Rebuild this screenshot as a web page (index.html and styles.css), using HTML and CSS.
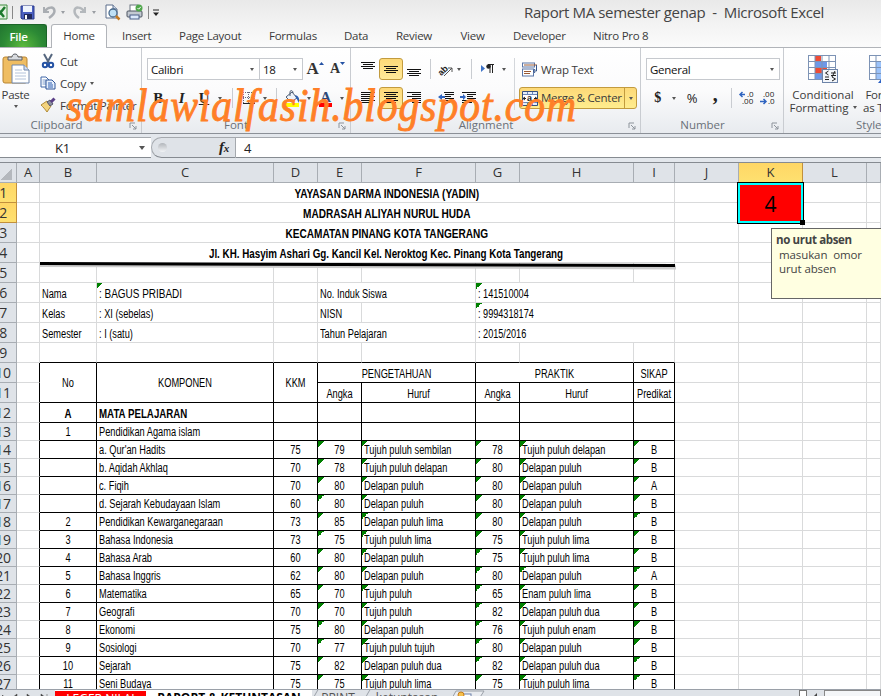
FILE: index.html
```
<!DOCTYPE html>
<html lang="id">
<head>
    <meta charset="UTF-8">
    <meta name="viewport" content="width=device-width, initial-scale=1.0">
    <title>Raport MA semester genap - Microsoft Excel</title>
    <link rel="stylesheet" href="styles.css">
</head>
<body>
<div class="window">

    <!-- Title bar -->
    <header class="titlebar">
        <div class="quick">
            <svg class="q-excel" width="9" height="18" viewBox="0 0 9 18"><path d="M0 2H7V16H0" fill="#e4f1e0" stroke="#3d8b3d"/><path d="M-4 4L4 14M5 4L-3 14" stroke="#1e7a2e" stroke-width="2.5"/></svg>
            <i class="bar"></i>
            <svg class="q-save" width="15" height="15" viewBox="0 0 15 15"><path d="M1 1H14V14H2L1 13Z" fill="#4b5fc0" stroke="#2b3a8c"/><rect x="3" y="1" width="9" height="6" fill="#eef3fc"/><rect x="4" y="9" width="8" height="5" fill="#20285a"/><rect x="5" y="10" width="2" height="4" fill="#fff"/></svg>
            <svg class="q-undo" width="14" height="14" viewBox="0 0 14 14"><path d="M1 2V7H6" fill="none" stroke="#a9adb2" stroke-width="2"/><path d="M2 6C5 2 11 1 11.500 6C11.500 9 9 11 6 13" fill="none" stroke="#a9adb2" stroke-width="2.500"/></svg>
            <i class="arrow dim q-a1"></i>
            <svg class="q-redo" width="14" height="14" viewBox="0 0 14 14"><path d="M13 2V7H8" fill="none" stroke="#b4b8bc" stroke-width="2"/><path d="M12 6C9 2 3 1 2.500 6C2.500 9 4 11 7 13" fill="none" stroke="#b4b8bc" stroke-width="2.500"/></svg>
            <i class="arrow dim q-a2"></i>
            <svg class="q-view" width="16" height="16" viewBox="0 0 16 16"><path d="M1 1H8L12 5V14H1Z" fill="#fff" stroke="#5d6f8c"/><path d="M8 1V5H12" fill="#cfd9ea" stroke="#5d6f8c"/><circle cx="8" cy="9" r="4" fill="#bfe0f5" stroke="#4a6a8c" stroke-width="1.300"/><path d="M11 12L14.500 15.500" stroke="#c47a22" stroke-width="2.500"/></svg>
            <svg class="q-print" width="17" height="16" viewBox="0 0 17 16"><rect x="4" y="1" width="8" height="7" fill="#fff" stroke="#6b7480"/><rect x="1" y="7" width="15" height="6" rx="1" fill="#c3c9d1" stroke="#4d5560"/><rect x="4" y="11" width="9" height="4" fill="#dce9fb" stroke="#4a5f88"/><circle cx="13" cy="4" r="3.500" fill="#4fa64b"/><path d="M11.500 4L12.700 5.200L14.800 2.800" fill="none" stroke="#fff"/></svg>
            <i class="bar"></i>
            <svg class="q-more" width="8" height="8" viewBox="0 0 8 8"><path d="M1 1H7" stroke="#222"/><path d="M1 3.500H7L4 7Z" fill="#222"/></svg>
        </div>
        <h1>Raport MA semester genap&nbsp; -&nbsp; Microsoft Excel</h1>
    </header>

    <!-- Ribbon tabs -->
    <nav class="tabs">
        <a class="file">File</a>
        <a class="home">Home</a>
        <a class="t-insert">Insert</a>
        <a class="t-layout">Page Layout</a>
        <a class="t-formulas">Formulas</a>
        <a class="t-data">Data</a>
        <a class="t-review">Review</a>
        <a class="t-view">View</a>
        <a class="t-dev">Developer</a>
        <a class="t-nitro">Nitro Pro 8</a>
    </nav>

    <!-- Ribbon -->
    <section class="ribbon">
        <div class="group clipboard">
            <div class="controls">
                <div class="paste">
                    <svg width="30" height="32" viewBox="0 0 30 32"><rect x="2" y="4" width="24" height="26" rx="2" fill="#efbd62" stroke="#b98532"/><path d="M7 7V4H11C11 0 17 0 17 4H21V7Z" fill="#d8dbdf" stroke="#5b5f66"/><path d="M11 12H23L28 17V30H11Z" fill="#fff" stroke="#6f86ab"/><path d="M23 12V17H28" fill="#d5e0f1" stroke="#6f86ab"/><path d="M14 17H21M14 20H25M14 23H25M14 26H25" stroke="#b4c3da"/></svg>
                    <span>Paste</span>
                    <i class="arrow"></i>
                </div>
                <ul class="edit">
                    <li><svg width="16" height="16" viewBox="0 0 16 16"><path d="M4 1L9 10M12 1L7 10" stroke="#56677f" stroke-width="2"/><circle cx="5" cy="12" r="2.200" fill="none" stroke="#2452a4" stroke-width="2"/><circle cx="11" cy="12" r="2.200" fill="none" stroke="#2452a4" stroke-width="2"/></svg>Cut</li>
                    <li><svg width="16" height="16" viewBox="0 0 16 16"><path d="M1 2H6L9 5V12H1Z" fill="#fff" stroke="#3f66a8"/><path d="M2.500 5H6M2.500 7H6M2.500 9H6" stroke="#7d9ccc"/><path d="M6 5H12L15 8V14H6Z" fill="#e7f0fd" stroke="#2f5597"/><path d="M8 8H12M8 10H13M8 12H13" stroke="#2f5fb0"/></svg>Copy<i class="arrow"></i></li>
                    <li><svg width="16" height="16" viewBox="0 0 16 16"><path d="M1 8L7 4L11 9L7 15C5 12 3 10 1 8Z" fill="#f3d37c" stroke="#b08a35"/><path d="M7 5L10 3L13 7L10 9Z" fill="#8c8fa0" stroke="#55586a"/><path d="M11 5L14.500 1.500" stroke="#5a3f86" stroke-width="3"/></svg>Format Painter</li>
                </ul>
            </div>
            <div class="caption"><span>Clipboard</span><svg class="launch" viewBox="0 0 8 8"><path d="M1 6V1H6M3 3L7 7M7 4V7H4" fill="none" stroke="#8d939b"/></svg></div>
        </div>

        <div class="group font">
            <div class="controls">
                <div class="line fontrow1">
                    <div class="combo">Calibri<i class="arrow"></i></div>
                    <div class="combo size">18<i class="arrow"></i></div>
                    <span class="grow">A<svg width="5" height="3" viewBox="0 0 5 3"><path d="M0 3L2.500 0L5 3Z" fill="#2452a4"/></svg></span>
                    <span class="grow small">A<svg width="5" height="3" viewBox="0 0 5 3"><path d="M0 0L2.500 3L5 0Z" fill="#2452a4"/></svg></span>
                </div>
                <div class="line fontrow2">
                    <b>B</b><b><em>I</em></b><b><u>U</u></b><i class="arrow"></i><i class="sep"></i>
                    <svg width="14" height="14" viewBox="0 0 14 14"><path d="M1.500 1V12M6.500 1V12M12.500 1V12M1 1.500H13M1 6.500H13" stroke="#667" stroke-dasharray="1 1"/><path d="M1 12.500H13" stroke="#222"/></svg>
                    <i class="arrow"></i><i class="sep"></i>
                    <svg width="17" height="17" viewBox="0 0 17 17"><rect x="0" y="13" width="15" height="4" fill="#ff0"/><path d="M2 7L8 2L13 8L7 12Z" fill="#edf3fa" stroke="#4a5a73"/><path d="M6 6V2C6 0 9 0 9 3" fill="none" stroke="#4a5a73"/><path d="M11 5C15 6 16 9 14.500 13C13.500 10 13 9 12 8Z" fill="#2f5fb0"/></svg>
                    <i class="arrow"></i>
                    <span class="fontcolor">A</span>
                    <i class="arrow"></i>
                </div>
            </div>
            <div class="caption"><span>Font</span><svg class="launch" viewBox="0 0 8 8"><path d="M1 6V1H6M3 3L7 7M7 4V7H4" fill="none" stroke="#8d939b"/></svg></div>
        </div>

        <div class="group alignment">
            <div class="controls">
                <div class="aligns">
                    <div class="line alignrow1">
                        <svg width="14" height="14" viewBox="0 0 14 14"><path d="M0 .5H14M2 2.500H12M0 4.500H14M2 6.500H12" stroke="#111"/></svg>
                        <span class="on"><svg width="14" height="14" viewBox="0 0 14 14"><path d="M0 4.500H14M2 6.500H12M0 8.500H14M2 10.500H12" stroke="#111"/></svg></span>
                        <svg width="14" height="14" viewBox="0 0 14 14"><path d="M0 7.500H14M2 9.500H12M0 11.500H14M2 13.500H12" stroke="#111"/></svg>
                        <i class="sep"></i>
                        <svg width="16" height="16" viewBox="0 0 16 16"><text x="-1" y="13" transform="rotate(-45 4 9)" class="ab">ab</text><path d="M6 15L14 7M14 11V7H10" fill="none" stroke="#555"/></svg>
                        <i class="arrow"></i><i class="sep"></i>
                        <svg width="14" height="12" viewBox="0 0 14 12"><path d="M0 2L4 5.500L0 9Z" fill="#3f74c8"/><path d="M9 2V10M11.500 2V10M7 1.500H13" stroke="#222" fill="none"/><circle cx="7.500" cy="3.500" r="2.200" fill="#222"/></svg>
                        <i class="arrow"></i>
                    </div>
                    <div class="line alignrow2">
                        <svg width="14" height="12" viewBox="0 0 14 12"><path d="M0 .5H14M0 2.500H9M0 4.500H14M0 6.500H9M0 8.500H14M0 10.500H9" stroke="#111"/></svg>
                        <span class="on"><svg width="14" height="12" viewBox="0 0 14 12"><path d="M0 .5H14M2 2.500H12M0 4.500H14M2 6.500H12M0 8.500H14M2 10.500H12" stroke="#111"/></svg></span>
                        <svg width="14" height="12" viewBox="0 0 14 12"><path d="M0 .5H14M5 2.500H14M0 4.500H14M5 6.500H14M0 8.500H14M5 10.500H14" stroke="#111"/></svg>
                        <i class="sep"></i>
                        <svg width="16" height="12" viewBox="0 0 16 12"><path d="M6 .5H16M7 2.500H16M7 4.500H13M7 6.500H16M5 8.500H16M5 10.500H12" stroke="#111"/><path d="M0 5L4 2V4H7V6H4V8Z" fill="#2f64c0"/></svg>
                        <svg width="16" height="12" viewBox="0 0 16 12"><path d="M2 .5H16M7 2.500H16M7 4.500H13M7 6.500H16M2 8.500H16M2 10.500H12" stroke="#111"/><path d="M6 5L3 2V4H0V6H3V8Z" fill="#2f64c0"/></svg>
                    </div>
                </div>
                <div class="wraps">
                    <div class="wrap">
                        <svg width="16" height="15" viewBox="0 0 16 15"><rect x=".5" y="1" width="12" height="4" fill="#fff" stroke="#5a76a8"/><path d="M2 3H15" stroke="#9a5a35"/><rect x=".5" y="7" width="11" height="7" fill="#fff" stroke="#5a76a8"/><path d="M2 9.500H9M2 11.500H8" stroke="#9a5a35"/><path d="M14.500 3V9H12M13 7L11.500 9L13 11" fill="none" stroke="#34558b"/></svg>
                        Wrap Text
                    </div>
                    <div class="merge">
                        <svg width="16" height="15" viewBox="0 0 16 15"><path d="M.5 .5H15.500V14.500H.5Z" fill="#e4eefb" stroke="#35507f"/><path d="M5.500 1V4M10.500 1V4M5.500 11V14M10.500 11V14M1 3.500H15M1 11.500H15" stroke="#6b86b5"/><rect x="1" y="4" width="14" height="7" fill="#fff"/><text x="5" y="10" class="ab">a</text><path d="M1 7.500H4M3 6L1 7.500L3 9M15 7.500H12M13 6L15 7.500L13 9" fill="none" stroke="#222"/></svg>
                        <span>Merge &amp; Center</span><i class="arrow"></i>
                    </div>
                </div>
            </div>
            <div class="caption"><span>Alignment</span><svg class="launch" viewBox="0 0 8 8"><path d="M1 6V1H6M3 3L7 7M7 4V7H4" fill="none" stroke="#8d939b"/></svg></div>
        </div>

        <div class="group number">
            <div class="controls">
                <div class="combo general">General<i class="arrow"></i></div>
                <div class="line numberrow">
                    <b>$</b><i class="arrow"></i><span class="percent">%</span><b class="comma">,</b><i class="sep"></i>
                    <svg width="17" height="14" viewBox="0 0 17 14"><path d="M1 3.500H6M3.500 1L1 3.500L3.500 6" fill="none" stroke="#2f64c0" stroke-width="1.500"/><text x="8" y="6" class="dec">.0</text><text x="3" y="13" class="dec">.00</text></svg>
                    <svg width="17" height="14" viewBox="0 0 17 14"><path d="M0 10.500H6M3.500 8L6 10.500L3.500 13" fill="none" stroke="#2f64c0" stroke-width="1.500"/><text x="3" y="6" class="dec">.00</text><text x="8" y="13" class="dec">.0</text></svg>
                </div>
            </div>
            <div class="caption"><span>Number</span><svg class="launch" viewBox="0 0 8 8"><path d="M1 6V1H6M3 3L7 7M7 4V7H4" fill="none" stroke="#8d939b"/></svg></div>
        </div>

        <div class="group styles">
            <div class="controls">
                <div class="big cond">
                    <svg width="30" height="28" viewBox="0 0 30 28"><rect x=".5" y=".5" width="27" height="24" fill="#fff" stroke="#7d93b5"/><rect x="7" y="1" width="6" height="5" fill="#ee4b35"/><rect x="7" y="7" width="12" height="5" fill="#6d97e8"/><rect x="7" y="13" width="12" height="5" fill="#ee4b35"/><rect x="7" y="19" width="7" height="5" fill="#6d97e8"/><path d="M7 0V25M14 0V25M21 0V25M0 6.500H28M0 12.500H28M0 18.500H28" stroke="#7d93b5"/><rect x="14.500" y="14.500" width="15" height="13" fill="#f3f6fb" stroke="#6c83a8"/><path d="M20.500 16L17.500 18L20.500 20M17 22H21M17 24.500H21M23 18H28M23 20.500H28M27 16L24 22M24 22L27.500 24L24 26" fill="none" stroke="#222"/></svg>
                    <span>Conditional</span><span>Formatting<i class="arrow"></i></span>
                </div>
                <div class="big fmt">
                    <svg width="30" height="28" viewBox="0 0 30 28"><rect x=".5" y=".5" width="27" height="24" fill="#fff" stroke="#7d93b5"/><rect x="7" y="6" width="20" height="18" fill="#9cc3fa"/><path d="M7 0V25M14 0V25M0 6.500H28M0 12.500H28M0 18.500H28" stroke="#7d93b5"/><path d="M9 28L13 23V28Z" fill="#2c61c4"/></svg>
                    <span>Format</span><span>as Table</span>
                </div>
            </div>
            <div class="caption"><span>Styles</span></div>
        </div>
    </section>

    <!-- Formula bar -->
    <section class="formula">
        <div class="namebox"><span>K1</span><i class="arrow"></i></div>
        <div class="fx"><i class="knob"></i><em>f<small>x</small></em></div>
        <div class="value">4</div>
    </section>

    <!-- Worksheet -->
    <main class="sheet">
        <table>
            <colgroup>
                <col class="c-num"><col class="c-a"><col class="c-b"><col class="c-c"><col class="c-d"><col class="c-e"><col class="c-f"><col class="c-e"><col class="c-f"><col class="c-i"><col class="c-j"><col class="c-j"><col class="c-j"><col class="c-m">
            </colgroup>
            <thead>
                <tr><th class="corner"></th><th>A</th><th>B</th><th>C</th><th>D</th><th>E</th><th>F</th><th>G</th><th>H</th><th>I</th><th>J</th><th class="picked">K</th><th>L</th><th></th></tr>
            </thead>
            <tbody class="kop">
                <tr><th class="picked">1</th><td></td><td colspan="8" class="title"><span>YAYASAN DARMA INDONESIA (YADIN)</span></td><td></td><td rowspan="2" class="active"><div class="selection">4<i></i></div></td><td></td><td></td></tr>
                <tr><th class="picked">2</th><td></td><td colspan="8" class="title"><span>MADRASAH ALIYAH NURUL HUDA</span></td><td></td><td></td><td></td></tr>
                <tr><th>3</th><td></td><td colspan="8" class="title"><span>KECAMATAN PINANG KOTA TANGERANG</span></td><td></td><td></td><td></td><td></td></tr>
                <tr><th>4</th><td></td><td colspan="8" class="title address"><span>Jl. KH. Hasyim Ashari Gg. Kancil Kel. Neroktog Kec. Pinang Kota Tangerang</span></td><td></td><td></td><td></td><td></td></tr>
                <tr><th>5</th><td></td><td></td><td></td><td></td><td></td><td></td><td></td><td></td><td></td><td></td><td></td><td></td><td></td></tr>
                <tr><th>6</th><td></td><td><span>Nama</span></td><td class="err name"><span>: BAGUS PRIBADI</span></td><td></td><td colspan="2"><span>No. Induk Siswa</span></td><td colspan="3" class="err id"><span>: 141510004</span></td><td></td><td></td><td></td><td></td></tr>
                <tr><th>7</th><td></td><td><span>Kelas</span></td><td><span>: XI (sebelas)</span></td><td></td><td><span>NISN</span></td><td></td><td colspan="3" class="err id"><span>: 9994318174</span></td><td></td><td></td><td></td><td></td></tr>
                <tr><th>8</th><td></td><td><span>Semester</span></td><td><span>: I (satu)</span></td><td></td><td colspan="2"><span>Tahun Pelajaran</span></td><td colspan="3" class="id"><span>: 2015/2016</span></td><td></td><td></td><td></td><td></td></tr>
                <tr class="last"><th>9</th><td></td><td></td><td></td><td></td><td></td><td></td><td></td><td></td><td></td><td></td><td></td><td></td><td></td></tr>
            </tbody>
            <tbody class="heading">
                <tr><th>10</th><td></td><td rowspan="2" class="mid"><span>No</span></td><td rowspan="2" class="mid"><span>KOMPONEN</span></td><td rowspan="2" class="mid"><span>KKM</span></td><td colspan="2"><span>PENGETAHUAN</span></td><td colspan="2"><span>PRAKTIK</span></td><td><span>SIKAP</span></td><td class="out"></td><td class="out"></td><td class="out"></td><td class="out"></td></tr>
                <tr><th>11</th><td></td><td><span>Angka</span></td><td><span>Huruf</span></td><td><span>Angka</span></td><td><span>Huruf</span></td><td class="predikat"><span>Predikat</span></td><td class="out"></td><td class="out"></td><td class="out"></td><td class="out"></td></tr>
            </tbody>
            <tbody class="marks">
                <tr class="tall"><th>12</th><td></td><td><b>A</b></td><td><b>MATA PELAJARAN</b></td><td></td><td></td><td></td><td></td><td></td><td></td><td></td><td></td><td></td><td></td></tr>
                <tr><th>13</th><td></td><td><span>1</span></td><td><span>Pendidikan Agama islam</span></td><td></td><td></td><td></td><td></td><td></td><td></td><td></td><td></td><td></td><td></td></tr>
            </tbody>
            <tbody class="marks filled" id="nilai"></tbody>
        </table>
        <svg class="rule" width="640" height="10" viewBox="0 0 640 10"><path d="M0 4L636 6.500" stroke="#ccc" stroke-width="4"/><path d="M0 2.500L635 4.500" stroke="#000" stroke-width="3"/></svg>
        <aside class="hint"><b>no urut absen</b><p>masukan&nbsp; omor</p><p>urut absen</p></aside>
    </main>

    <!-- Sheet tabs -->
    <footer class="sheets">
        <svg class="nav" width="54" height="12" viewBox="0 0 54 12"><path d="M3 5L-1 9L3 12ZM17 4L12 8L17 12ZM27 4L32 8L27 12ZM41 4L46 8L41 12ZM47 4V12" fill="#444" stroke="#444" stroke-width=".5"/></svg>
        <span class="leger">LEGER NILAI</span>
        <span class="current">RAPORT &amp; KETUNTASAN</span>
        <span class="other print">PRINT</span>
        <span class="other ket">ketuntasan</span>
        <svg class="new" width="34" height="12" viewBox="0 0 34 12"><path d="M0 12L6 1H34L27 12" fill="#e9ecf0" stroke="#9aa0a8"/><rect x="13" y="4" width="8" height="8" fill="#fff" stroke="#6a7fa8"/><circle cx="11" cy="5" r="3" fill="#f5c04c" stroke="#c67b1a"/></svg>
        <div class="scroll"><i class="grip"></i><i class="left"></i><i class="track"></i></div>
    </footer>

    <svg class="watermark" width="530" height="64" viewBox="0 0 530 64"><text x="6" y="38" textLength="511" lengthAdjust="spacingAndGlyphs">samlawialfasih.blogspot.com</text></svg>
</div>
<script src="script.js"></script>
</body>
</html>
```
FILE: script.js
```
// no, komponen, kkm, angka, huruf (pengetahuan), angka, huruf (praktik), predikat
const nilai = [
    ['', "a. Qur'an Hadits", 75, 79, 'Tujuh puluh sembilan', 78, 'Tujuh puluh delapan', 'B'],
    ['', 'b. Aqidah Akhlaq', 70, 78, 'Tujuh puluh delapan', 80, 'Delapan puluh', 'B'],
    ['', 'c. Fiqih', 70, 80, 'Delapan puluh', 80, 'Delapan puluh', 'A'],
    ['', 'd. Sejarah Kebudayaan Islam', 60, 80, 'Delapan puluh', 80, 'Delapan puluh', 'B'],
    [2, 'Pendidikan Kewarganegaraan', 73, 85, 'Delapan puluh lima', 80, 'Delapan puluh', 'B'],
    [3, 'Bahasa Indonesia', 73, 75, 'Tujuh puluh lima', 75, 'Tujuh puluh lima', 'B'],
    [4, 'Bahasa Arab', 60, 80, 'Delapan puluh', 75, 'Tujuh puluh lima', 'B'],
    [5, 'Bahasa Inggris', 62, 80, 'Delapan puluh', 80, 'Delapan puluh', 'A'],
    [6, 'Matematika', 65, 70, 'Tujuh puluh', 65, 'Enam puluh lima', 'B'],
    [7, 'Geografi', 70, 70, 'Tujuh puluh', 82, 'Delapan puluh dua', 'B'],
    [8, 'Ekonomi', 75, 80, 'Delapan puluh', 76, 'Tujuh puluh enam', 'B'],
    [9, 'Sosiologi', 70, 77, 'Tujuh puluh tujuh', 80, 'Delapan puluh', 'B'],
    [10, 'Sejarah', 75, 82, 'Delapan puluh dua', 82, 'Delapan puluh dua', 'B'],
    [11, 'Seni Budaya', 75, 75, 'Tujuh puluh lima', 75, 'Tujuh puluh lima', 'B']
];

const body = document.getElementById('nilai');
nilai.forEach((row, i) => {
    const cells = row.map(v => '<td><span>' + v + '</span></td>').join('');
    body.insertAdjacentHTML('beforeend',
        '<tr><th>' + (i + 14) + '</th><td></td>' + cells + '<td></td><td></td><td></td><td></td></tr>');
});
```
FILE: styles.css
```
* {
    box-sizing: border-box;
}
body {
    margin: 0;
    background: #fff;
    font-family: "Open Sans", "Noto Sans", sans-serif;
    font-size: 11.5px;
    letter-spacing: -.27px;
    color: #3b3b3b;
}
.window {
    position: relative;
    width: 881px;
    height: 696px;
    overflow: hidden;
    display: flex;
    flex-direction: column;
}
svg {
    display: block;
    flex: none;
    overflow: visible;
}

/* small drop-down arrow */
.arrow {
    display: inline-block;
    flex: none;
    width: 0;
    height: 0;
    border: 2.5px solid transparent;
    border-top: 3px solid #555;
    border-bottom: 0;
}
.arrow.dim {
    border-top-color: #9a9ea3;
}

/* title bar */
.titlebar {
    height: 24px;
    display: flex;
    align-items: center;
    background: linear-gradient(#e9e9e9, #f3f3f3);
}
.quick {
    width: 524px;
    height: 20px;
    display: flex;
    align-items: center;
}
.bar {
    width: 1px;
    height: 13px;
    background: #888;
    margin-left: 3px;
}
.q-excel { overflow: hidden; }
.q-save { margin-left: 7px; }
.q-undo { margin-left: 8px; }
.q-a1 { margin-left: 4px; }
.q-redo { margin-left: 7px; }
.q-a2 { margin-left: 6px; }
.q-view { margin-left: 9px; }
.q-print { margin-left: 5px; }
.q-more { margin-left: 3px; margin-top: 2px; }
.quick .q-print + .bar { margin-left: 5px; }
.titlebar h1 {
    margin: 0;
    font-size: 15px;
    font-weight: normal;
    letter-spacing: -.37px;
    white-space: nowrap;
    color: #444;
}

/* ribbon tabs */
.tabs {
    height: 23px;
    display: flex;
    background: linear-gradient(#f3f3f3, #fbfbfb);
}
.tabs a {
    line-height: 24px;
    text-align: center;
    white-space: nowrap;
    margin-right: 28px;
}
.tabs .file {
    width: 47px;
    margin-right: 4px;
    padding-right: 9px;
    color: #fff;
    font-weight: 600;
    background: radial-gradient(ellipse at 50% 100%, #5cba3c, #2c8a35 60%, #217430);
    border: 1px solid #1b6428;
    border-width: 1px 1px 0 0;
    border-radius: 0 3px 0 0;
}
.tabs .home {
    width: 56px;
    height: 24px;
    margin-right: 15px;
    background: #fff;
    border: 1px solid #b1b4b9;
    border-bottom: 0;
    border-radius: 3px 3px 0 0;
    line-height: 22px;
    z-index: 1;
}
.t-insert { width: 29px; }
.t-layout { width: 62px; }
.t-formulas { width: 47px; }
.t-data { width: 24px; }
.t-review { width: 36px; }
.t-view { width: 25px; }
.t-dev { width: 52px; }
.t-nitro { width: 55px; }

/* ribbon */
.ribbon {
    height: 87px;
    display: flex;
    background: linear-gradient(#fff, #fbfbfc 50%, #e8ebef);
    border-top: 1px solid #b1b4b9;
    border-bottom: 1px solid #8b9097;
}
.group {
    display: flex;
    flex-direction: column;
    border-right: 1px solid #c9ccd1;
    flex: none;
}
.controls {
    height: 69px;
}
.caption {
    display: flex;
    height: 16px;
    line-height: 16px;
    letter-spacing: 0;
    color: #6a7078;
    justify-content: space-between;
    padding-right: 4px;
}
.caption span {
    flex: 1;
    text-align: center;
}
.launch {
    width: 8px;
    height: 8px;
    margin-top: 5px;
}
.clipboard { width: 142px; }
.font { width: 209px; }
.alignment { width: 290px; }
.number { width: 143px; }
.styles { width: 180px; }

.clipboard .controls {
    display: flex;
}
.clipboard .caption span {
    padding-right: 16px;
}
.font .caption span {
    padding-right: 8px;
}
.alignment .caption span,
.number .caption span {
    padding-right: 7px;
}
.paste {
    width: 38px;
    padding-top: 5px;
    display: flex;
    flex-direction: column;
    align-items: center;
    padding-right: 7px;
}
.paste span {
    line-height: 20px;
}
.edit {
    list-style: none;
    margin: 2px 0 0 2px;
    padding: 0;
}
.edit li {
    display: flex;
    align-items: center;
    gap: 4px;
    height: 22px;
    white-space: nowrap;
}
.line {
    display: grid;
    align-items: center;
    justify-items: center;
    height: 22px;
}
.sep {
    width: 1px;
    height: 20px;
    background: #c9ccd1;
}
.font .controls,
.number .controls {
    padding: 10px 0 0 5px;
}
.fontrow1 {
    grid-template-columns: 113px 43px 24px 21px;
}
.fontrow2 {
    grid-template-columns: 22px 25px 20px 12px 12px 21px 12px 10px 22px 11px 23px 9px;
    margin-top: 7px;
    font-family: "Liberation Serif", serif;
    font-size: 15px;
    color: #222;
}
.combo {
    width: 100%;
    height: 22px;
    padding: 0 5px 0 3px;
    display: flex;
    align-items: center;
    justify-content: space-between;
    background: #fff;
    border: 1px solid #c6c9ce;
    color: #111;
}
.combo.size {
    border-left: 0;
}
.grow {
    display: flex;
    font: bold 17px/22px "Liberation Serif", serif;
    color: #333;
}
.grow.small {
    font-size: 14px;
}
.grow svg {
    margin-top: 4px;
}
.fontcolor {
    width: 13px;
    height: 17px;
    line-height: 14px;
    text-align: center;
    font-weight: bold;
    color: #2f4a78;
    border-bottom: 4px solid #f00;
}
.alignment .controls {
    display: flex;
    padding: 10px 0 0 6px;
}
.aligns {
    width: 158px;
    border-right: 1px solid #d4d7db;
    height: 52px;
}
.alignrow1 {
    grid-template-columns: 22px 24px 22px 10px 21px 6px 18px 15px 18px;
}
.alignrow2 {
    grid-template-columns: 22px 24px 22px 10px 22px 22px;
    margin-top: 7px;
}
.alignrow2 .sep {
    visibility: hidden;
}
.on {
    display: grid;
    place-items: center;
    width: 24px;
    height: 22px;
    background: linear-gradient(#fdd978, #ffe99a);
    border: 1px solid #c29b3e;
    border-radius: 3px;
}
.ab {
    font: bold 9px "Liberation Sans", sans-serif;
    fill: #222;
}
.wraps {
    padding-left: 4px;
}
.wrap,
.merge {
    display: flex;
    align-items: center;
    gap: 3px;
    height: 22px;
    padding-left: 3px;
    white-space: nowrap;
}
.merge {
    margin-top: 7px;
    width: 118px;
    padding-left: 2px;
    border: 1px solid #c29b3e;
    border-radius: 3px;
    background: linear-gradient(#fdd978, #ffed8e);
}
.merge span {
    width: 84px;
    line-height: 20px;
    border-right: 1px solid #c29b3e;
}
.merge .arrow {
    margin-left: 1px;
}
.general {
    width: 134px;
}
.numberrow {
    grid-template-columns: 23px 10px 26px 20px 12px 20px 22px;
    margin-top: 7px;
    color: #222;
}
.numberrow b {
    font: bold 14px "Liberation Serif", serif;
}
.numberrow .comma {
    font-size: 20px;
    line-height: 10px;
    margin-top: -8px;
}
.percent {
    font-size: 13px;
}
.dec {
    font-size: 8px;
    letter-spacing: 0;
    fill: #222;
}
.styles .controls {
    display: flex;
    padding-top: 7px;
}
.big {
    display: flex;
    flex-direction: column;
    align-items: center;
    line-height: 13px;
    white-space: nowrap;
}
.big svg {
    margin-bottom: 5px;
}
.cond { width: 78px; }
.fmt { width: 44px; }
.cond span {
    letter-spacing: 0;
}
.cond .arrow {
    margin: 0 0 3px 4px;
}

/* formula bar */
.formula {
    height: 29px;
    padding: 3px 0 4px;
    display: flex;
    background: #e3e7ec;
    border-bottom: 1px solid #868b91;
    font-size: 13px;
}
.formula > div {
    border-top: 1px solid #a5a9ae;
    border-bottom: 1px solid #868b91;
    background: #fff;
    display: flex;
    align-items: center;
    color: #222;
}
.namebox {
    width: 151px;
    padding-right: 6px;
}
.namebox span {
    flex: 1;
    padding-right: 14px;
    text-align: center;
}
.namebox .arrow {
    border-width: 4px 3.5px 0;
}
.fx {
    width: 85px;
    justify-content: space-between;
    padding: 0 6px 0 6px;
    border-right: 1px solid #a5a9ae;
}
.formula > .fx {
    background: #dfe3e8;
    border-left: 1px solid #a5a9ae;
    border-radius: 11px 0 0 11px;
}
.knob {
    width: 9px;
    height: 9px;
    border-radius: 50%;
    background: linear-gradient(#b2b6bb, #f2f4f6);
}
.fx em {
    font: italic bold 15px/18px "Liberation Serif", serif;
}
.fx small {
    font-size: 11px;
}
.value {
    flex: 1;
    padding-left: 8px;
}

/* worksheet */
.sheet {
    position: relative;
    height: 526px;
    overflow: hidden;
    color: #000;
}
table {
    width: 881px;
    table-layout: fixed;
    border-spacing: 0;
    letter-spacing: 0;
}
.c-num { width: 17px; }
.c-a { width: 23px; }
.c-b { width: 57px; }
.c-c { width: 177px; }
.c-d { width: 44px; }
.c-e { width: 44px; }
.c-f { width: 114px; }
.c-i { width: 41px; }
.c-j { width: 64px; }
.c-m { width: 14px; }
tr {
    height: 20px;
}
.marks tr {
    height: 18px;
}
.marks .tall {
    height: 20px;
}
td, th {
    padding: 0;
    border-right: 1px solid #d9dadb;
    border-bottom: 1px solid #d9dadb;
    white-space: nowrap;
}
td {
    padding: 0 2px;
    vertical-align: bottom;
    font: 12px/16px "Liberation Sans", sans-serif;
}
/* narrow the cell text, the report uses a condensed face */
td span,
td b {
    display: block;
    transform: scaleX(.77);
    transform-origin: 0 50%;
}
th {
    font-size: 13px;
    font-weight: normal;
    line-height: 17px;
    color: #333;
    background: #dfe3e8;
    border-color: #a8adb3;
}
tbody th {
    text-indent: -10px;
    font-size: 14px;
    letter-spacing: -.3px;
}
th.picked {
    background: linear-gradient(#ffd765, #fee070);
    border-color: #c2903c;
}
.corner {
    background: linear-gradient(135deg, transparent 50%, #b4b8bd 50%) 0 5px / 12px 12px no-repeat #dfe3e8;
}
.title {
    text-align: center;
    font-weight: bold;
}
td.title span {
    padding-left: 71px;
    transform: scaleX(.84);
    transform-origin: 50% 50%;
}
td.address span {
    transform: scaleX(.817);
}
.name span {
    transform: scaleX(.83);
}
.id span {
    font-size: 12.5px;
    transform: scaleX(.73);
}
.err,
.filled td:nth-child(6),
.filled td:nth-child(7),
.filled td:nth-child(8),
.filled td:nth-child(9),
.filled td:nth-child(10) {
    background: linear-gradient(135deg, #008000 50%, transparent 50%) 0 0 / 6px 6px no-repeat;
}

/* report table frame */
.last td:nth-child(n+3):nth-child(-n+10),
.heading td:not(.out),
.marks td:nth-child(-n+10) {
    border-color: #000;
}
.heading td:nth-child(2),
.marks td:nth-child(2) {
    border-bottom-color: #d9dadb;
}
.last td:nth-child(n+3):nth-child(-n+10) {
    border-right-color: #d9dadb;
}
.heading td,
.marks td {
    text-align: center;
}
.heading span,
.marks span,
.marks b {
    transform-origin: 50% 50%;
}
.heading .mid {
    vertical-align: middle;
}
td.predikat span {
    margin: 0 -4px;
}
.marks td:nth-child(4),
.marks td:nth-child(7),
.marks td:nth-child(9) {
    text-align: left;
}
.marks td:nth-child(4) > *,
.marks td:nth-child(7) > *,
.marks td:nth-child(9) > * {
    transform-origin: 0 50%;
}
.marks b {
    transform: scaleX(.81);
}

/* active cell */
.active {
    padding: 0;
    position: relative;
}
.selection {
    position: absolute;
    inset: 0 -1px -1px -1px;
    border: 2px solid #0ff;
    outline: 1px solid #000;
    background: #f00;
    font: 21px/38px "Open Sans", sans-serif;
    text-align: center;
}
.selection i {
    position: absolute;
    right: -4px;
    bottom: -4px;
    width: 5px;
    height: 5px;
    background: #000;
}
.rule {
    position: absolute;
    left: 40px;
    top: 98px;
}
.hint {
    position: absolute;
    left: 771px;
    top: 65px;
    width: 120px;
    height: 71px;
    padding: 4px;
    background: #ffffe1;
    border: 1px solid #666;
    line-height: 14.5px;
    letter-spacing: -.1px;
    color: #444;
}
.hint b {
    letter-spacing: -.35px;
}
.hint p {
    margin: 0 0 0 3px;
}

/* sheet tabs */
.sheets {
    height: 7px;
    display: flex;
    overflow: hidden;
    background: #dfe3e8;
    border-top: 1px solid #9aa0a8;
    font-size: 12px;
    line-height: 16px;
    letter-spacing: 0;
    white-space: nowrap;
}
.sheets span {
    height: 18px;
    text-align: center;
    flex: none;
}
.leger {
    width: 91px;
    margin-left: 1px;
    background: #f00;
    color: #fff;
    border-top: 1px solid #fff;
}
.current {
    width: 166px;
    background: #fff;
    color: #000;
    font-weight: bold;
}
.other {
    position: relative;
    color: #555;
}
.other::before {
    content: "";
    position: absolute;
    left: 3px;
    top: 0;
    height: 8px;
    border-left: 1px solid #9aa0a8;
    transform: skewX(-30deg);
}
.print { width: 52px; }
.ket { width: 86px; }
.scroll {
    flex: 1;
    display: flex;
    justify-content: flex-end;
}
.grip {
    width: 8px;
    height: 12px;
    border: 1px solid #777;
    background: #fff;
}
.left {
    margin: 3px 7px 0 7px;
    border: 3px solid transparent;
    border-right-color: #444;
    border-left: 0;
}
.track {
    width: 57px;
    height: 12px;
    border: 1px solid #888;
    background: #f4f6f8;
}

.watermark {
    position: absolute;
    left: 60px;
    top: 83px;
    pointer-events: none;
}
.watermark text {
    font: italic 46px "Liberation Serif", serif;
    letter-spacing: 1px;
    fill: #ff7f27;
    stroke: #ff7f27;
    stroke-width: .9;
}
```
